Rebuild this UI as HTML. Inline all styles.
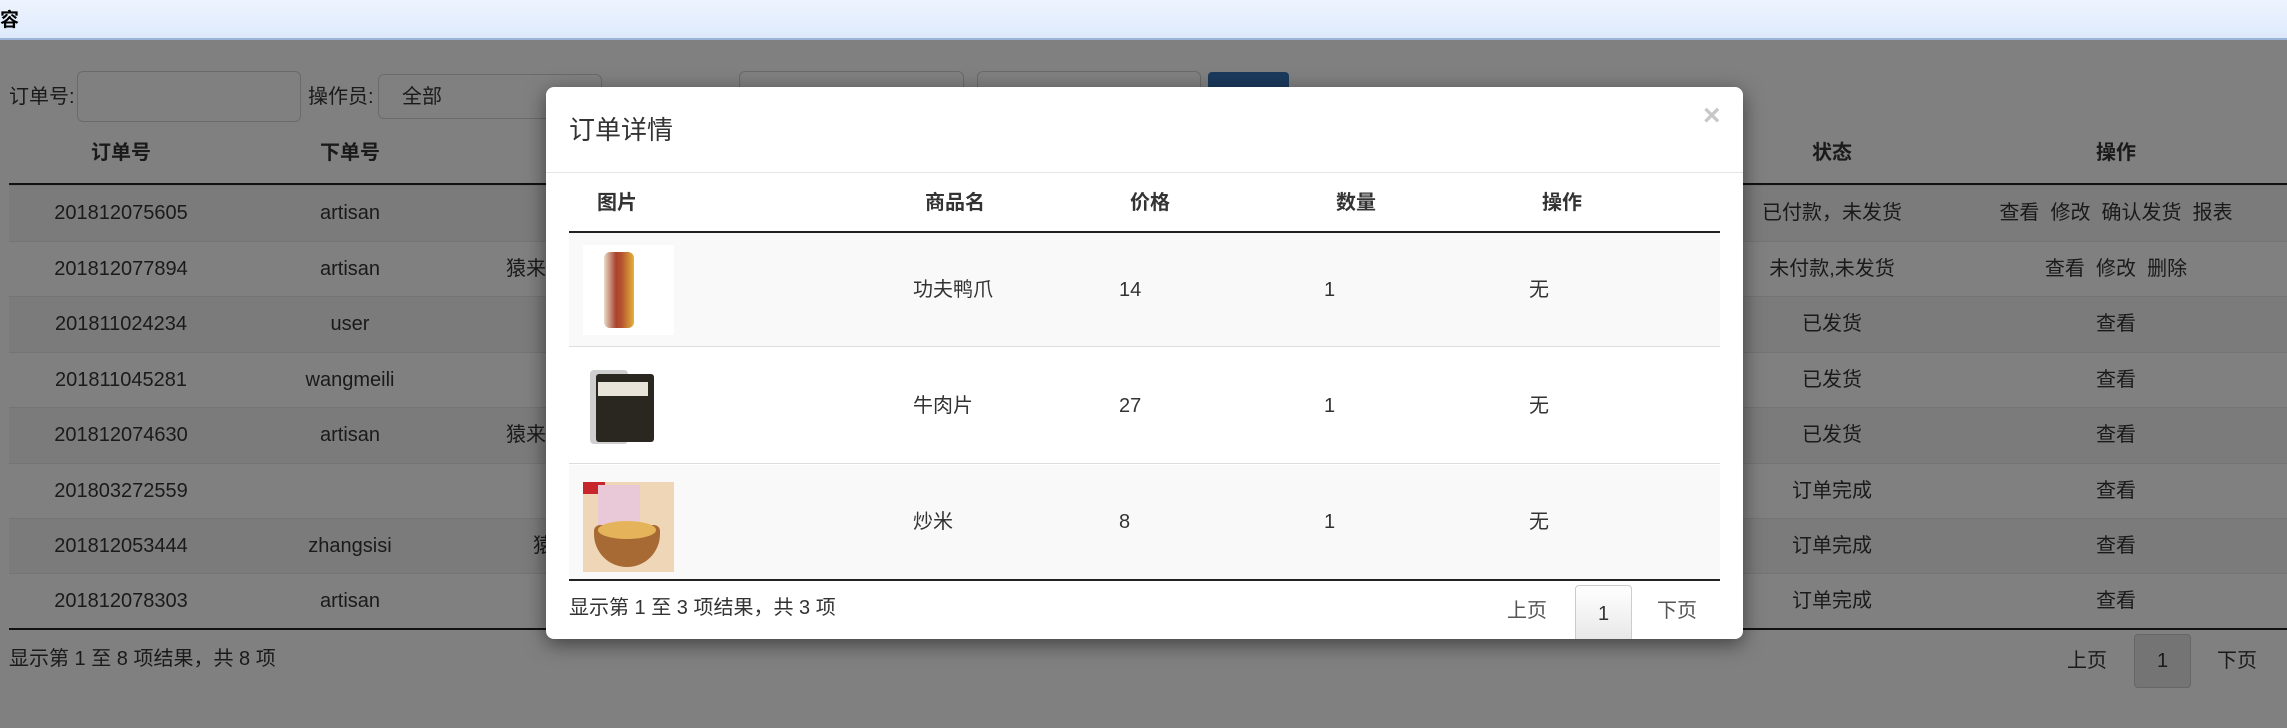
<!DOCTYPE html>
<html><head><meta charset="utf-8"><style>
*{margin:0;padding:0;box-sizing:border-box}
body{width:2287px;height:728px;overflow:hidden;background:#808080;font-family:"Liberation Sans","Noto Sans CJK SC",sans-serif;font-size:20px;line-height:24px;color:#1a1a1a;position:relative}
.a{position:absolute;white-space:nowrap}
.top{left:0;top:0;width:2287px;height:40px;background:linear-gradient(#eef4fe,#dde9fb);border-bottom:2px solid #9bb4d6}
.inp{position:absolute;border:1px solid #6a6a6a;border-radius:6px;background:#808080}
.row{position:absolute;left:9px;width:2278px;height:56px;border-top:1px solid #747474}
.str{background:#7b7b7b}
.c{position:absolute;text-align:center;line-height:54px}
.th{font-weight:bold;position:absolute;text-align:center}
.modal{left:546px;top:87px;width:1197px;height:552px;background:#fff;border-radius:8px;box-shadow:0 5px 20px rgba(0,0,0,.5);overflow:hidden;color:#333}
.m{position:absolute;white-space:nowrap;line-height:24px}
</style></head><body>
<div class="a top"></div>
<div class="a" style="left:0;top:9px;font-size:19px;font-weight:bold;color:#000">容</div>

<div class="a" style="left:9px;top:85px">订单号:</div>
<div class="inp" style="left:77px;top:71px;width:224px;height:51px"></div>
<div class="a" style="left:308px;top:85px">操作员:</div>
<div class="inp" style="left:378px;top:74px;width:224px;height:45px"></div>
<div class="a" style="left:402px;top:85px">全部</div>
<div class="inp" style="left:739px;top:71px;width:225px;height:51px"></div>
<div class="inp" style="left:977px;top:71px;width:224px;height:51px"></div>
<div class="a" style="left:1208px;top:72px;width:81px;height:50px;background:#1b3a5c;border-radius:4px"></div>

<div class="th" style="left:61px;top:141px;width:120px">订单号</div>
<div class="th" style="left:290px;top:141px;width:120px">下单号</div>
<div class="th" style="left:1772px;top:141px;width:120px">状态</div>
<div class="th" style="left:2056px;top:141px;width:120px">操作</div>
<div class="a" style="left:9px;top:183px;width:2278px;height:2px;background:#111"></div>

<div class="row str" style="top:185px"><div class="c" style="left:0;width:224px">201812075605</div><div class="c" style="left:241px;width:200px">artisan</div><div class="c" style="left:1723px;width:200px">已付款，未发货</div><div class="c" style="left:1957px;width:300px">查看&nbsp; 修改&nbsp; 确认发货&nbsp; 报表</div></div>
<div class="row" style="top:241px"><div class="c" style="left:0;width:224px">201812077894</div><div class="c" style="left:241px;width:200px">artisan</div><div class="c" style="left:487px;width:60px">猿来</div><div class="c" style="left:1723px;width:200px">未付款,未发货</div><div class="c" style="left:1957px;width:300px">查看&nbsp; 修改&nbsp; 删除</div></div>
<div class="row str" style="top:296px"><div class="c" style="left:0;width:224px">201811024234</div><div class="c" style="left:241px;width:200px">user</div><div class="c" style="left:1723px;width:200px">已发货</div><div class="c" style="left:1957px;width:300px">查看</div></div>
<div class="row" style="top:352px"><div class="c" style="left:0;width:224px">201811045281</div><div class="c" style="left:241px;width:200px">wangmeili</div><div class="c" style="left:1723px;width:200px">已发货</div><div class="c" style="left:1957px;width:300px">查看</div></div>
<div class="row str" style="top:407px"><div class="c" style="left:0;width:224px">201812074630</div><div class="c" style="left:241px;width:200px">artisan</div><div class="c" style="left:487px;width:60px">猿来</div><div class="c" style="left:1723px;width:200px">已发货</div><div class="c" style="left:1957px;width:300px">查看</div></div>
<div class="row" style="top:463px"><div class="c" style="left:0;width:224px">201803272559</div><div class="c" style="left:1723px;width:200px">订单完成</div><div class="c" style="left:1957px;width:300px">查看</div></div>
<div class="row str" style="top:518px"><div class="c" style="left:0;width:224px">201812053444</div><div class="c" style="left:241px;width:200px">zhangsisi</div><div class="c" style="left:519px;width:30px">猿</div><div class="c" style="left:1723px;width:200px">订单完成</div><div class="c" style="left:1957px;width:300px">查看</div></div>
<div class="row" style="top:573px"><div class="c" style="left:0;width:224px">201812078303</div><div class="c" style="left:241px;width:200px">artisan</div><div class="c" style="left:1723px;width:200px">订单完成</div><div class="c" style="left:1957px;width:300px">查看</div></div>
<div class="a" style="left:9px;top:628px;width:2278px;height:2px;background:#111"></div>

<div class="a" style="left:9px;top:647px">显示第 1 至 8 项结果，共 8 项</div>
<div class="a" style="left:2067px;top:649px">上页</div>
<div class="a" style="left:2134px;top:634px;width:57px;height:54px;border:1px solid #666;border-radius:4px;background:#747474;text-align:center;line-height:52px">1</div>
<div class="a" style="left:2217px;top:649px">下页</div>

<div class="a modal">
 <div class="m" style="left:23px;top:28px;font-size:26px;line-height:30px">订单详情</div>
 <div class="m" style="left:1157px;top:17px;font-size:30px;font-weight:bold;color:#c8c8c8">×</div>
 <div class="m" style="left:0;top:85px;width:1197px;height:1px;background:#e5e5e5"></div>
 <div class="m" style="left:51px;top:104px;font-weight:bold">图片</div>
 <div class="m" style="left:379px;top:104px;font-weight:bold">商品名</div>
 <div class="m" style="left:584px;top:104px;font-weight:bold">价格</div>
 <div class="m" style="left:790px;top:104px;font-weight:bold">数量</div>
 <div class="m" style="left:996px;top:104px;font-weight:bold">操作</div>
 <div class="m" style="left:23px;top:144px;width:1151px;height:2px;background:#222"></div>
 <div class="m" style="left:23px;top:146px;width:1151px;height:114px;background:#f9f9f9;border-bottom:1px solid #ddd"></div>
 <div class="m" style="left:23px;top:261px;width:1151px;height:116px;border-bottom:1px solid #ddd"></div>
 <div class="m" style="left:23px;top:378px;width:1151px;height:114px;background:#f9f9f9"></div>
 <div class="m" style="left:23px;top:492px;width:1151px;height:2px;background:#222"></div>
 <div class="m" style="left:37px;top:158px;width:91px;height:90px;background:#fff"></div>
 <div class="m" style="left:58px;top:165px;width:30px;height:76px;background:linear-gradient(90deg,#e8dcc8,#a8432f 40%,#b8542f 60%,#e2b43a);border-radius:6px"></div>
 <div class="m" style="left:44px;top:283px;width:38px;height:74px;background:#cfcfcf;border-radius:4px"></div>
 <div class="m" style="left:50px;top:287px;width:58px;height:68px;background:#2a2620;border-radius:3px"></div>
 <div class="m" style="left:52px;top:295px;width:50px;height:14px;background:#e8e4da"></div>
 <div class="m" style="left:37px;top:395px;width:91px;height:90px;background:#efd6b6"></div>
 <div class="m" style="left:37px;top:395px;width:22px;height:12px;background:#c7262a"></div>
 <div class="m" style="left:52px;top:398px;width:42px;height:46px;background:#e9c9d8"></div>
 <div class="m" style="left:48px;top:438px;width:66px;height:42px;background:#a86a34;border-radius:6px 6px 33px 33px"></div>
 <div class="m" style="left:52px;top:434px;width:58px;height:18px;background:#e5b45a;border-radius:50%"></div>
 <div class="m" style="left:367px;top:191px">功夫鸭爪</div>
 <div class="m" style="left:573px;top:191px">14</div>
 <div class="m" style="left:778px;top:191px">1</div>
 <div class="m" style="left:983px;top:191px">无</div>
 <div class="m" style="left:367px;top:307px">牛肉片</div>
 <div class="m" style="left:573px;top:307px">27</div>
 <div class="m" style="left:778px;top:307px">1</div>
 <div class="m" style="left:983px;top:307px">无</div>
 <div class="m" style="left:367px;top:423px">炒米</div>
 <div class="m" style="left:573px;top:423px">8</div>
 <div class="m" style="left:778px;top:423px">1</div>
 <div class="m" style="left:983px;top:423px">无</div>
 <div class="m" style="left:23px;top:509px">显示第 1 至 3 项结果，共 3 项</div>
 <div class="m" style="left:961px;top:512px;color:#555">上页</div>
 <div class="m" style="left:1029px;top:498px;width:57px;height:60px;border:1px solid #ccc;border-radius:4px;background:linear-gradient(#fff,#e6e6e6);text-align:center;line-height:56px">1</div>
 <div class="m" style="left:1111px;top:512px;color:#555">下页</div>
</div>
</body></html>
